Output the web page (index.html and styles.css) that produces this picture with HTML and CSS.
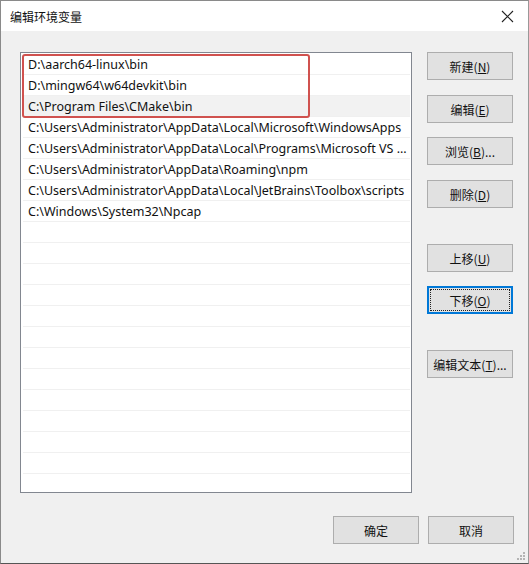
FILE: index.html
```html
<!DOCTYPE html>
<html lang="zh-CN">
<head>
<meta charset="utf-8">
<title>编辑环境变量</title>
<link rel="stylesheet" href="styles.css">
</head>
<body>
<div class="window">
  <div class="titlebar">
    <span class="title">编辑环境变量</span>
    <span class="close">
      <svg width="13" height="13" viewBox="0 0 13 13"><path d="M1 1 L12 12 M12 1 L1 12" stroke="#222" stroke-width="1.1" fill="none"/></svg>
    </span>
  </div>
  <div class="content">
    <div class="main">
      <div class="list">
        <div class="row">D:\aarch64-linux\bin</div>
        <div class="row">D:\mingw64\w64devkit\bin</div>
        <div class="row hover">C:\Program Files\CMake\bin</div>
        <div class="row">C:\Users\Administrator\AppData\Local\Microsoft\WindowsApps</div>
        <div class="row">C:\Users\Administrator\AppData\Local\Programs\Microsoft VS ...</div>
        <div class="row">C:\Users\Administrator\AppData\Roaming\npm</div>
        <div class="row">C:\Users\Administrator\AppData\Local\JetBrains\Toolbox\scripts</div>
        <div class="row">C:\Windows\System32\Npcap</div>
        <div class="row"></div><div class="row"></div><div class="row"></div><div class="row"></div>
        <div class="row"></div><div class="row"></div><div class="row"></div><div class="row"></div>
        <div class="row"></div><div class="row"></div><div class="row"></div><div class="row"></div>
        <div class="row"></div>
        <div class="highlight-box"></div>
      </div>
      <div class="side">
        <button class="btn">新建(<u>N</u>)</button>
        <button class="btn">编辑(<u>E</u>)</button>
        <button class="btn">浏览(<u>B</u>)...</button>
        <button class="btn">删除(<u>D</u>)</button>
        <button class="btn">上移(<u>U</u>)</button>
        <button class="btn focused"><span class="focus-ring">下移(<u>O</u>)</span></button>
        <button class="btn">编辑文本(<u>T</u>)...</button>
      </div>
    </div>
    <div class="footer">
      <button class="btn">确定</button>
      <button class="btn">取消</button>
    </div>
    <div class="grip">
      <svg width="10" height="10" viewBox="0 0 10 10" fill="#b4b4b4">
        <rect x="7" y="1" width="2" height="2"/>
        <rect x="4" y="4" width="2" height="2"/><rect x="7" y="4" width="2" height="2"/>
        <rect x="1" y="7" width="2" height="2"/><rect x="4" y="7" width="2" height="2"/><rect x="7" y="7" width="2" height="2"/>
      </svg>
    </div>
  </div>
</div>
</body>
</html>
```
FILE: styles.css
```css
* { box-sizing: border-box; }
html, body { margin: 0; padding: 0; background: #f0f0f0; }
body {
  font-family: "Noto Sans", "Noto Sans CJK SC", sans-serif;
  font-size: 12px;
  color: #000;
}
.window {
  width: 529px;
  height: 564px;
  border: 1px solid #8a8a8a;
  border-bottom-color: #555;
  border-right-color: #999;
  background: #f0f0f0;
  display: flex;
  flex-direction: column;
  position: relative;
}
.titlebar {
  height: 30px;
  background: #fff;
  display: flex;
  align-items: center;
  justify-content: space-between;
  padding-left: 9px;
  padding-right: 14px;
  flex: none;
}
.title { font-family: "Noto Sans CJK SC", sans-serif; font-size: 12px; color: #111; }
.close { display: flex; align-items: center; }
.content {
  flex: 1;
  padding: 21px 14px 0 19px;
  display: flex;
  flex-direction: column;
}
.main { display: flex; gap: 15px; }
.list {
  width: 392px;
  height: 441px;
  background: #fff;
  border: 1px solid #828790;
  padding: 1px 1px 0 2px;
  overflow: hidden;
  position: relative;
}
.row {
  height: 21px;
  border-bottom: 1px solid #f0f0f0;
  padding-left: 5px;
  line-height: 21px;
  white-space: nowrap;
  overflow: hidden;
  font-size: 12.5px;
  color: #111;
}
.row.hover { background: #f2f2f2; }
.highlight-box {
  position: absolute;
  left: 1px;
  top: 1px;
  width: 288px;
  height: 64px;
  border: 2px solid #d0524f;
  border-radius: 3px;
}
.side { display: flex; flex-direction: column; width: 86px; }
.btn {
  width: 86px;
  height: 28px;
  background: #e1e1e1;
  border: 1px solid #adadad;
  font-family: "Noto Sans CJK SC", sans-serif;
  font-size: 12px;
  color: #111;
  padding: 0;
  display: flex;
  align-items: center;
  justify-content: center;
}
.btn u { text-underline-offset: 1px; }
.side .btn:nth-child(2) { margin-top: 15px; }
.side .btn:nth-child(3) { margin-top: 14px; }
.side .btn:nth-child(4) { margin-top: 15px; }
.side .btn:nth-child(5) { margin-top: 36px; }
.side .btn:nth-child(6) { margin-top: 14px; }
.side .btn:nth-child(7) { margin-top: 36px; }
.btn.focused {
  border: 2px solid #0078d7;
  padding: 1px;
}
.focus-ring {
  width: 100%;
  height: 100%;
  border: 1px dotted #222;
  display: flex;
  align-items: center;
  justify-content: center;
}
.footer {
  display: flex;
  justify-content: flex-end;
  gap: 9px;
  margin-top: 23px;
}
.grip {
  position: absolute;
  right: 2px;
  bottom: 2px;
  line-height: 0;
}
```
